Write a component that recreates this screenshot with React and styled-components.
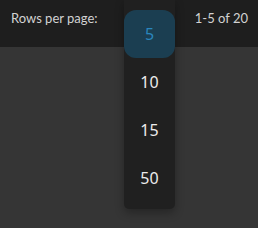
import React from 'react';
import styled, { createGlobalStyle } from 'styled-components';

const Global = createGlobalStyle`
  html, body {
    margin: 0;
    padding: 0;
    background: #353535;
  }
`;

const Page = styled.div`
  position: relative;
  width: 258px;
  height: 228px;
  background: #353535;
  overflow: hidden;
`;

const Toolbar = styled.div`
  height: 47px;
  display: flex;
  justify-content: space-between;
  align-items: flex-start;
  padding: 0 10px 0 11px;
  box-sizing: border-box;
  background: #1e1e1e;
  color: #d2d2d2;
  font-family: Lato, "Liberation Sans", sans-serif;
  font-size: 13px;
`;

const Label = styled.span`
  line-height: 13px;
  margin-top: 12px;
`;

const Menu = styled.ul`
  position: absolute;
  top: 0;
  left: 124px;
  width: 51px;
  margin: 0;
  padding: 10px 0 7px;
  list-style: none;
  background: #202020;
  border-radius: 0 0 5px 5px;
  box-shadow: 0 4px 10px rgba(0, 0, 0, 0.3);
  font-family: "Noto Sans", "Open Sans", sans-serif;
  font-size: 16px;
`;

const Item = styled.li`
  height: 48px;
  display: flex;
  align-items: center;
  justify-content: center;
  border-radius: 12px;
  color: ${p => (p.$selected ? '#2a86bd' : '#ececec')};
  background: ${p => (p.$selected ? '#1b3e51' : 'transparent')};
`;

const options = [5, 10, 15, 50];

export default function App() {
  return (
    <Page>
      <Global />
      <Toolbar>
        <Label>Rows per page:</Label>
        <Label>1-5 of 20</Label>
      </Toolbar>
      <Menu>
        {options.map(n => (
          <Item key={n} $selected={n === 5}>{n}</Item>
        ))}
      </Menu>
    </Page>
  );
}
